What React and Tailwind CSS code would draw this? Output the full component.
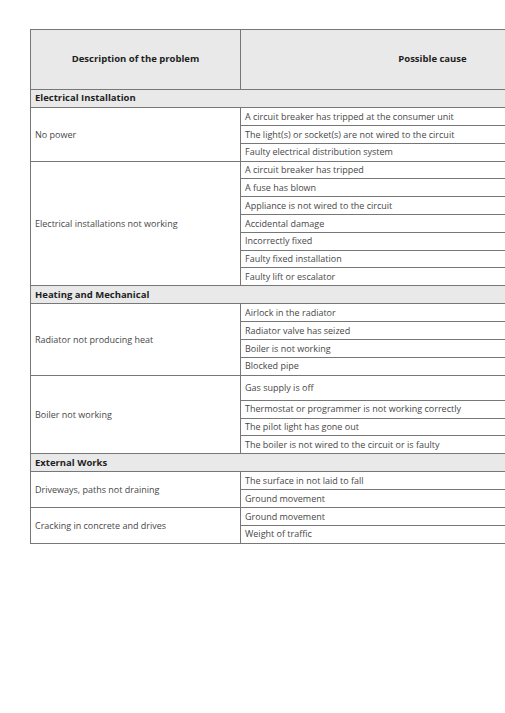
import React from 'react';

const sections = [
  {
    title: 'Electrical Installation',
    groups: [
      {
        problem: 'No power',
        causes: [
          'A circuit breaker has tripped at the consumer unit',
          'The light(s) or socket(s) are not wired to the circuit',
          'Faulty electrical distribution system',
        ],
      },
      {
        problem: 'Electrical installations not working',
        causes: [
          'A circuit breaker has tripped',
          'A fuse has blown',
          'Appliance is not wired to the circuit',
          'Accidental damage',
          'Incorrectly fixed',
          'Faulty fixed installation',
          'Faulty lift or escalator',
        ],
      },
    ],
  },
  {
    title: 'Heating and Mechanical',
    groups: [
      {
        problem: 'Radiator not producing heat',
        causes: ['Airlock in the radiator', 'Radiator valve has seized', 'Boiler is not working', 'Blocked pipe'],
      },
      {
        problem: 'Boiler not working',
        causes: [
          'Gas supply is off',
          'Thermostat or programmer is not working correctly',
          'The pilot light has gone out',
          'The boiler is not wired to the circuit or is faulty',
        ],
        tall: 0,
      },
    ],
  },
  {
    title: 'External Works',
    groups: [
      { problem: 'Driveways, paths not draining', causes: ['The surface in not laid to fall', 'Ground movement'] },
      { problem: 'Cracking in concrete and drives', causes: ['Ground movement', 'Weight of traffic'] },
    ],
  },
];

export default function App() {
  return (
    <div className="w-[505px] h-[713px] overflow-hidden bg-white pt-[29px] pl-[30px]" style={{ fontFamily: '"Open Sans", sans-serif' }}>
      <div className="w-[594px] border-l border-t border-[#777] text-[9px] text-[#474747]">
        {/* header */}
        <div className="flex h-[60px] border-b border-[#777] bg-[#e9e9e9] font-bold text-[#1e1e1e] text-[9.5px]">
          <div className="w-[210px] flex items-center justify-center border-r border-[#777]">Description of the problem</div>
          <div className="flex-1 flex items-center justify-center">Possible cause</div>
        </div>

        {sections.map((s) => (
          <div key={s.title}>
            <div className="h-[18.2px] flex items-center pl-1 border-b border-[#777] bg-[#e9e9e9] font-bold text-[#1e1e1e] text-[9.5px]">
              {s.title}
            </div>
            {s.groups.map((g) => (
              <div key={g.problem} className="flex border-b border-[#777]">
                <div className="w-[210px] flex items-center pl-1 border-r border-[#777]">{g.problem}</div>
                <div className="flex-1">
                  {g.causes.map((c, i) => (
                    <div
                      key={c}
                      className={
                        'flex items-center pl-1 ' +
                        (i < g.causes.length - 1 ? 'border-b border-[#777] ' : '') +
                        (g.tall === i ? 'h-[25.3px]' : i === g.causes.length - 1 ? 'h-[16.8px]' : 'h-[17.8px]')
                      }
                    >
                      {c}
                    </div>
                  ))}
                </div>
              </div>
            ))}
          </div>
        ))}
      </div>
    </div>
  );
}
